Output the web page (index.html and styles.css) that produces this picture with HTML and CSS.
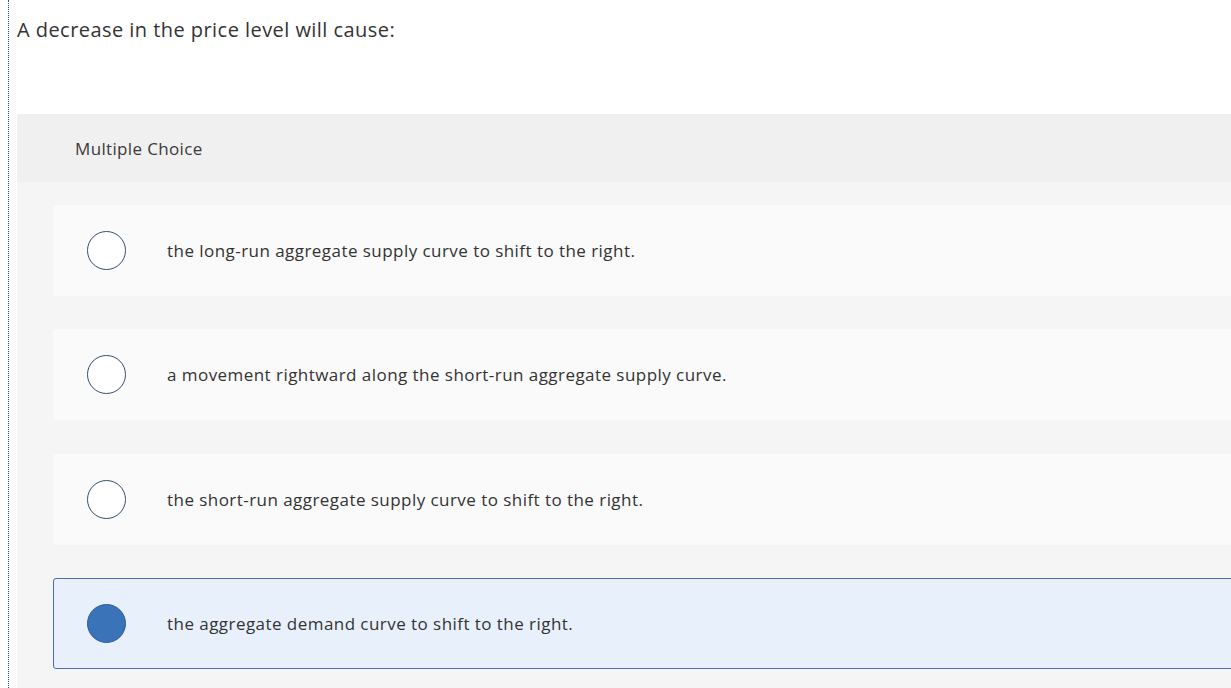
FILE: index.html
```html
<!DOCTYPE html>
<html>
<head>
<meta charset="utf-8">
<link rel="stylesheet" href="styles.css">
</head>
<body>
<div class="frame">
  <p class="question">A decrease in the price level will cause:</p>
  <div class="mc-header">Multiple Choice</div>
  <div class="choices">
    <div class="choice">
      <span class="radio"></span>
      <span class="label">the long-run aggregate supply curve to shift to the right.</span>
    </div>
    <div class="choice">
      <span class="radio"></span>
      <span class="label">a movement rightward along the short-run aggregate supply curve.</span>
    </div>
    <div class="choice">
      <span class="radio"></span>
      <span class="label">the short-run aggregate supply curve to shift to the right.</span>
    </div>
    <div class="choice selected">
      <span class="radio"></span>
      <span class="label">the aggregate demand curve to shift to the right.</span>
    </div>
  </div>
</div>
</body>
</html>
```
FILE: styles.css
```css
html, body {
  margin: 0;
  padding: 0;
  background: #ffffff;
  overflow: hidden;
}
body {
  font-family: "Open Sans", "Liberation Sans", sans-serif;
  color: #333333;
}
.frame {
  margin-left: 8px;
  border-left: 1px dotted #2c4f9e;
  padding-left: 8px;
  height: 688px;
  box-sizing: border-box;
  overflow: hidden;
}
.question {
  margin: 0;
  padding-top: 16px;
  height: 114px;
  box-sizing: border-box;
  font-size: 20px;
  line-height: 28px;
  letter-spacing: 0.45px;
  color: #333333;
}
.mc-header {
  background: #f0f0f0;
  height: 68px;
  display: flex;
  align-items: center;
  padding-left: 58px;
  font-size: 17px;
  letter-spacing: 0.35px;
  color: #3a3a3a;
}
.choices {
  background: #f5f5f5;
  padding: 23px 0 20px 36px;
  display: flex;
  flex-direction: column;
  gap: 33.4px;
  height: 506px;
  box-sizing: border-box;
}
.choice {
  background: #fafafa;
  height: 91px;
  flex: none;
  display: flex;
  align-items: center;
  margin-right: -10px;
  border: 1px solid transparent;
  border-radius: 3px;
  box-sizing: border-box;
}
.choice.selected {
  background: #e8f1fb;
  border-color: #4a6fb0;
}
.radio {
  width: 37px;
  height: 37px;
  border: 1.3px solid #34506e;
  border-radius: 50%;
  background: #ffffff;
  margin-left: 33px;
  flex: none;
}
.selected .radio {
  background: #3a73b8;
  border-color: #2e5e98;
}
.label {
  margin-left: 41px;
  font-size: 17px;
  letter-spacing: 0.45px;
  color: #333333;
}
```
